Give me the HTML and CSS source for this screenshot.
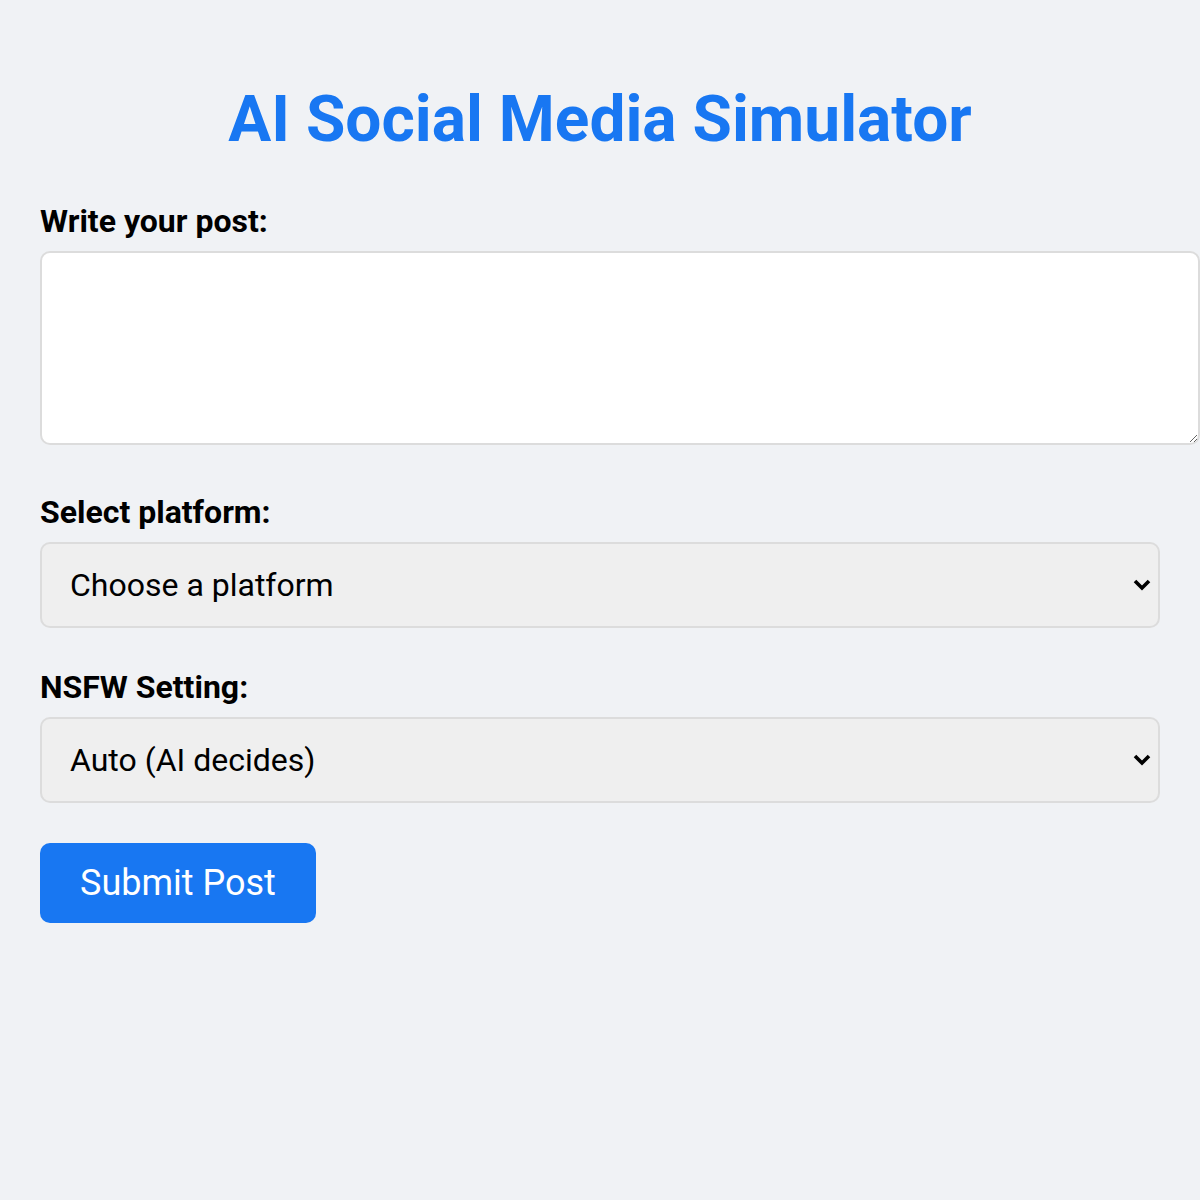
FILE: index.html
```html
<!DOCTYPE html>
<html lang="en">
<head>
    <meta charset="UTF-8">
    <meta name="viewport" content="width=device-width, initial-scale=1.0">
    <title>AI Social Media Simulator</title>
    <link rel="stylesheet" href="styles.css">
</head>
<body>
    <div class="container">
        <h1>AI Social Media Simulator</h1>
        <form class="post-form" onsubmit="return false;">
            <div class="field">
                <label for="postContent">Write your post:</label>
                <textarea id="postContent"></textarea>
            </div>
            <div class="field">
                <label for="platform">Select platform:</label>
                <div class="select-wrap">
                    <select id="platform">
                        <option value="">Choose a platform</option>
                        <option value="twitter">Twitter</option>
                        <option value="facebook">Facebook</option>
                        <option value="reddit">Reddit</option>
                    </select>
                    <svg class="chevron" width="18" height="12" viewBox="0 0 18 12"><path d="M2 2 L9 9 L16 2" fill="none" stroke="#000" stroke-width="3.6"/></svg>
                </div>
            </div>
            <div class="field">
                <label for="nsfw">NSFW Setting:</label>
                <div class="select-wrap">
                    <select id="nsfw">
                        <option value="auto">Auto (AI decides)</option>
                        <option value="on">Allow NSFW</option>
                        <option value="off">No NSFW</option>
                    </select>
                    <svg class="chevron" width="18" height="12" viewBox="0 0 18 12"><path d="M2 2 L9 9 L16 2" fill="none" stroke="#000" stroke-width="3.6"/></svg>
                </div>
            </div>
            <button type="submit" class="submit-btn">Submit Post</button>
        </form>
    </div>
</body>
</html>
```

FILE: styles.css
```css
html, body {
    margin: 0;
    padding: 0;
    overflow-x: hidden;
}
body {
    font-family: Roboto, "Liberation Sans", Arial, sans-serif;
    background: #f0f2f5;
    color: #000;
}
.container {
    padding: 40px;
}
h1 {
    color: #1877f2;
    font-size: 64px;
    font-weight: bold;
    text-align: center;
    margin: 42px 0 45px;
}
.field {
    margin-bottom: 40px;
}
.field label {
    display: block;
    font-size: 32px;
    font-weight: bold;
    margin-bottom: 11px;
}
textarea {
    display: block;
    width: calc(100% - 4px);
    height: 150px;
    padding: 20px;
    font-family: inherit;
    font-size: 32px;
    border: 2px solid #dcdcdc;
    border-radius: 10px;
    background: white;
    margin-bottom: 48px;
}
.select-wrap {
    position: relative;
}
select {
    display: block;
    width: 100%;
    -webkit-appearance: none;
    appearance: none;
    font-family: inherit;
    font-size: 32px;
    color: #000;
    padding: 22px 28px;
    border: 2px solid #dcdcdc;
    border-radius: 10px;
    background: #efefef;
}
.chevron {
    position: absolute;
    right: 9px;
    top: 50%;
    transform: translateY(-50%);
    pointer-events: none;
}
.submit-btn {
    background: #1877f2;
    color: white;
    font-family: inherit;
    font-size: 36px;
    border: none;
    border-radius: 10px;
    padding: 19px 40px;
    cursor: pointer;
}
```
